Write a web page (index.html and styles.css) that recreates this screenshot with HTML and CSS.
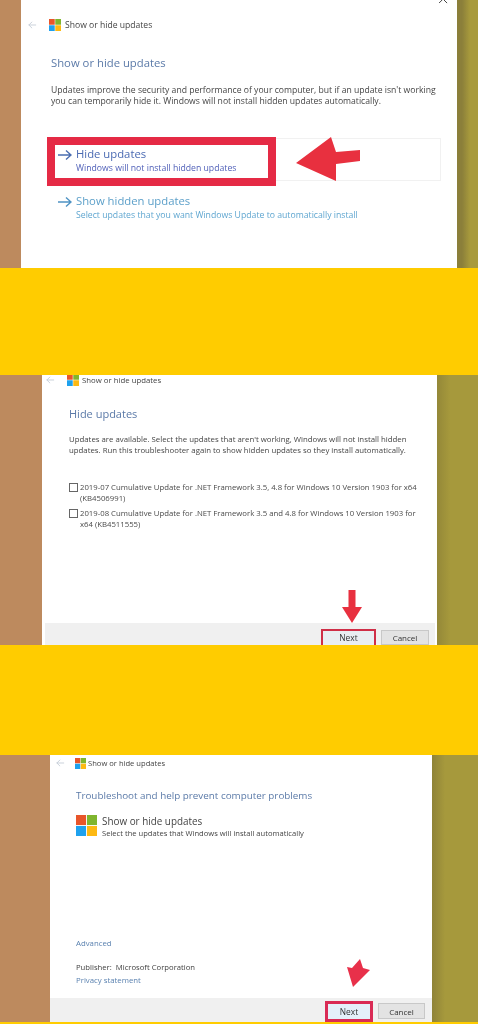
FILE: index.html
```html
<!DOCTYPE html>
<html lang="en">
<head>
<meta charset="utf-8">
<title>Show or hide updates</title>
<link rel="stylesheet" href="styles.css">
</head>
<body>
<svg class="defs" width="0" height="0" aria-hidden="true">
  <defs>
    <g id="winlogo">
      <rect x="0" y="0" width="11" height="11" fill="#e8552a"/>
      <rect x="12" y="0" width="11" height="11" fill="#7fb52e"/>
      <rect x="0" y="12" width="11" height="11" fill="#1ea1ee"/>
      <rect x="12" y="12" width="11" height="11" fill="#fdb913"/>
    </g>
    <g id="go"><path d="M1 7H14M9 2.5L14 7L9 11.5" fill="none" stroke="currentColor" stroke-width="1.4"/></g>
    <g id="back"><path d="M0.5 5H10M5 1L1 5L5 9" fill="none" stroke="#c4ccd6" stroke-width="1.1"/></g>
  </defs>
</svg>

<section class="panel panel-a">
  <div class="window">
    <svg class="close" viewBox="0 0 10 10"><path d="M0 0L9 9M9 0L0 9" stroke="#444" stroke-width="1.1"/></svg>
    <header class="titlebar">
      <svg class="back" viewBox="0 0 11 10"><use href="#back"/></svg>
      <svg class="logo" viewBox="0 0 23 23"><use href="#winlogo"/></svg>
      <span class="title">Show or hide updates</span>
    </header>
    <h1 class="heading">Show or hide updates</h1>
    <p class="body">Updates improve the security and performance of your computer, but if an update isn't working<br>you can temporarily hide it. Windows will not install hidden updates automatically.</p>
    <div class="option option-hide">
      <svg class="go" viewBox="0 0 15 14"><use href="#go"/></svg>
      <div>
        <div class="opt-title">Hide updates</div>
        <div class="opt-sub">Windows will not install hidden updates</div>
      </div>
    </div>
    <div class="option option-show">
      <svg class="go" viewBox="0 0 15 14"><use href="#go"/></svg>
      <div>
        <div class="opt-title">Show hidden updates</div>
        <div class="opt-sub">Select updates that you want Windows Update to automatically install</div>
      </div>
    </div>
  </div>
  <div class="mark-box"></div>
  <svg class="mark-arrow-left" viewBox="0 0 66 46"><path d="M0 26L35 0L40 15L64 13L64 24L40 27L40 44Z" fill="#e8303f"/></svg>
</section>

<div class="band band-a"></div>

<section class="panel panel-b">
  <div class="window">
    <header class="titlebar">
      <svg class="back" viewBox="0 0 11 10"><use href="#back"/></svg>
      <svg class="logo" viewBox="0 0 23 23"><use href="#winlogo"/></svg>
      <span class="title">Show or hide updates</span>
    </header>
    <h1 class="heading">Hide updates</h1>
    <p class="body">Updates are available. Select the updates that aren't working, Windows will not install hidden<br>updates. Run this troubleshooter again to show hidden updates so they install automatically.</p>
    <div class="check-list">
      <div class="check-row"><span class="check"></span><span class="check-label">2019-07 Cumulative Update for .NET Framework 3.5, 4.8 for Windows 10 Version 1903 for x64<br>(KB4506991)</span></div>
      <div class="check-row"><span class="check"></span><span class="check-label">2019-08 Cumulative Update for .NET Framework 3.5 and 4.8 for Windows 10 Version 1903 for<br>x64 (KB4511555)</span></div>
    </div>
    <footer class="footer">
      <span class="btn btn-next">Next</span>
      <span class="btn btn-cancel">Cancel</span>
    </footer>
  </div>
  <svg class="mark-arrow-down" viewBox="0 0 20 33"><path d="M6.5 0H13.5V17H20L10 33L0 17H6.5Z" fill="#e8303f"/></svg>
</section>

<div class="band band-b"></div>

<section class="panel panel-c">
  <div class="window">
    <header class="titlebar">
      <svg class="back" viewBox="0 0 11 10"><use href="#back"/></svg>
      <svg class="logo" viewBox="0 0 23 23"><use href="#winlogo"/></svg>
      <span class="title">Show or hide updates</span>
    </header>
    <h1 class="heading">Troubleshoot and help prevent computer problems</h1>
    <div class="tool">
      <svg class="tool-logo" viewBox="0 0 23 23"><use href="#winlogo"/></svg>
      <div>
        <div class="tool-title">Show or hide updates</div>
        <div class="tool-sub">Select the updates that Windows will install automatically</div>
      </div>
    </div>
    <div class="meta">
      <a class="link link-adv">Advanced</a>
      <div class="publisher">Publisher:&nbsp; Microsoft Corporation</div>
      <a class="link">Privacy statement</a>
    </div>
    <footer class="footer">
      <span class="btn btn-next">Next</span>
      <span class="btn btn-cancel">Cancel</span>
    </footer>
  </div>
  <svg class="mark-arrow-tilt" viewBox="0 0 24 29"><path d="M13 0L16 9L23 11L6 28L0 8L5 9Z" fill="#e8304a"/></svg>
</section>

<div class="band band-c"></div>
</body>
</html>
```

FILE: styles.css
```css
* { box-sizing: border-box; }
html, body { margin: 0; padding: 0; }
body {
  width: 478px;
  height: 1024px;
  overflow: hidden;
  background: #ffcc00;
  font-family: "Open Sans", "Noto Sans", sans-serif;
  color: #3a3a3a;
}
.defs { position: absolute; }

.band { background: #ffcc00; }
.band-a { height: 107px; }
.band-b { height: 110px; }
.band-c { height: 2px; }

.panel {
  position: relative;
  display: flex;
  overflow: hidden;
  filter: blur(0.4px);
}
.panel-a {
  height: 268px;
  background: linear-gradient(90deg, #bd8a5e 0 21px, #8b7f3a 457px, #8b7f3a 462px, #a89a3c 470px);
}
.panel-b {
  height: 270px;
  background: linear-gradient(90deg, #bd8a5e 0 42px, #948838 437px, #a6993c 450px);
}
.panel-c {
  height: 267px;
  background: linear-gradient(90deg, #bd8a5e 0 50px, #8f8338 432px, #a6993c 445px);
}

.window {
  position: relative;
  display: flex;
  flex-direction: column;
  background: #fff;
  flex: none;
}
.panel-a .window { margin-left: 21px; width: 436px; padding: 19px 0 0 30px; }
.panel-b .window { margin-left: 42px; width: 395px; padding: 0 0 0 27px; }
.panel-c .window { margin-left: 50px; width: 382px; padding: 2px 0 0 26px; }

.close { position: absolute; right: 9px; top: -5px; width: 9px; height: 9px; }

.titlebar {
  display: flex;
  align-items: center;
  height: 12px;
  flex: none;
}
.panel-b .titlebar { margin-top: -1px; }
.back { width: 9px; height: 8px; flex: none; margin-left: -23px; }
.logo { width: 12px; height: 12px; flex: none; margin-left: 12px; }
.title { font-size: 8.6px; line-height: 12px; margin-left: 4px; white-space: nowrap; color: #444; }
.panel-b .logo { margin-left: 12px; }
.panel-b .title { margin-left: 3px; font-size: 7.8px; }
.panel-c .back { margin-left: -20px; }
.panel-c .logo { width: 11px; height: 11px; margin-left: 10px; }
.panel-c .title { margin-left: 2px; font-size: 7.6px; }

.heading {
  margin: 0;
  font-size: 11px;
  font-weight: 400;
  line-height: 16px;
  color: #5b7aa8;
  white-space: nowrap;
}
.panel-a .heading { margin-top: 24px; font-size: 11.3px; }
.panel-b .heading { margin-top: 20px; }
.panel-c .heading { margin-top: 18px; font-size: 9.85px; }

.body {
  margin: 0;
  font-size: 8.65px;
  line-height: 11px;
  color: #454545;
  white-space: nowrap;
}
.panel-a .body { margin-top: 14px; }
.panel-b .body { margin-top: 12px; font-size: 7.82px; line-height: 10.5px; }

.option {
  display: flex;
  align-items: flex-start;
  gap: 4px;
  margin-left: 6px;
}
.option-hide {
  height: 43px;
  margin-top: 31px;
  margin-left: -4px;
  margin-right: 16px;
  padding: 7px 0 0 9px;
  border: 1px solid #f1f1f1;
}
.option-show { margin-top: 12px; color: #4f93c4; }
.option-hide { color: #4a6db0; }
.go { width: 15px; height: 14px; flex: none; margin-top: 2px; }
.opt-title { font-size: 11.3px; line-height: 15px; white-space: nowrap; }
.opt-sub { font-size: 8.7px; line-height: 11px; margin-top: 2px; white-space: nowrap; }
.option-show .opt-title { color: #5b9fc9; }
.option-show .opt-sub { color: #5fa6d0; }
.option-hide .opt-title { color: #4a6ab2; }
.option-hide .opt-sub { color: #4f5fb8; }

.mark-box {
  position: absolute;
  left: 47px;
  top: 137px;
  width: 229px;
  height: 49px;
  border: 8px solid #e52a45;
}
.mark-arrow-left { position: absolute; left: 296px; top: 137px; width: 66px; height: 46px; }
.mark-arrow-down { position: absolute; left: 342px; top: 215px; width: 20px; height: 33px; }
.mark-arrow-tilt { position: absolute; left: 347px; top: 204px; width: 24px; height: 29px; }

.check-list { margin-top: 27px; display: flex; flex-direction: column; gap: 5px; }
.check-row { display: flex; align-items: flex-start; gap: 2px; }
.check {
  flex: none;
  width: 9px;
  height: 9px;
  margin-top: 1px;
  border: 1px solid #666;
  background: #fff;
}
.check-label { font-size: 7.75px; line-height: 10.5px; white-space: nowrap; color: #4a4a4a; }

.tool { display: flex; gap: 5px; margin-top: 12px; }
.tool-logo { width: 21px; height: 21px; flex: none; margin-top: 0; }
.tool-title { font-size: 9.9px; line-height: 13px; color: #444; white-space: nowrap; }
.tool-sub { font-size: 7.6px; line-height: 11px; color: #444; white-space: nowrap; }

.meta { margin-top: auto; padding-bottom: 12px; display: flex; flex-direction: column; }
.link { font-size: 7.8px; line-height: 12px; color: #5b82b0; }
.link-adv { margin-bottom: 12px; }
.publisher { font-size: 7.7px; line-height: 12px; margin-bottom: 1px; color: #3f3f3f; }

.footer {
  flex: none;
  margin-top: auto;
  display: flex;
  align-items: flex-end;
  justify-content: flex-end;
  background: #f0f0f0;
}
.meta + .footer { margin-top: 0; }
.panel-b .footer { height: 22px; margin-left: -24px; margin-right: 2px; padding-right: 6px; gap: 5px; }
.panel-c .footer { height: 24px; margin-left: -26px; padding-right: 7px; gap: 5px; align-items: flex-start; padding-top: 3px; }

.btn {
  display: flex;
  align-items: center;
  justify-content: center;
  font-size: 8px;
  color: #333;
  background: #e3e3e3;
  border: 1px solid #c8c8c8;
}
.btn-next { font-size: 8.4px; }
.panel-b .btn-next { width: 55px; height: 16px; background: #e9eef2; border: 2px solid #cf2f48; border-bottom-width: 0; padding-bottom: 1px; }
.panel-b .btn-cancel { width: 48px; height: 15px; }
.panel-c .btn-next { width: 48px; height: 21px; background: #e4f0fa; border: 3px solid #d92b55; }
.panel-c .btn-cancel { width: 47px; height: 16px; margin-top: 2px; }
```
